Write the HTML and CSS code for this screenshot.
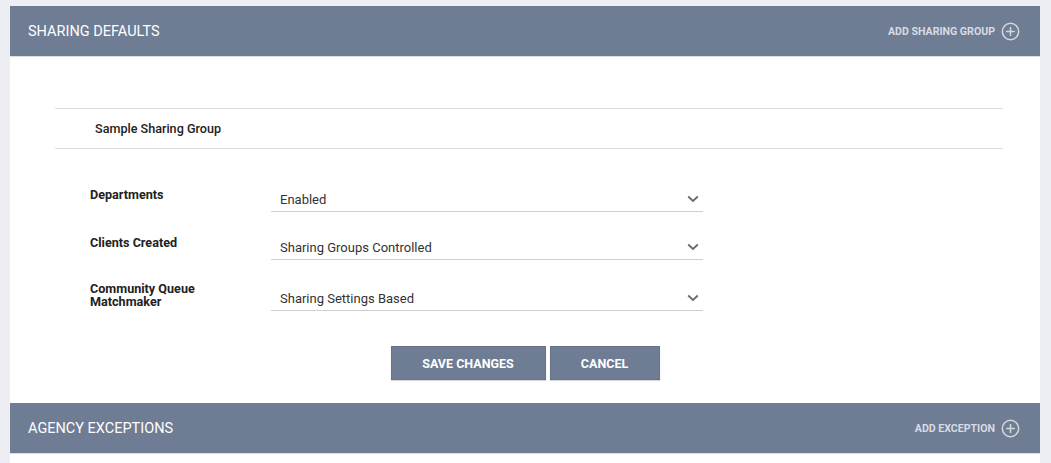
FILE: index.html
```html
<!DOCTYPE html>
<html lang="en">
<head>
<meta charset="utf-8">
<title>Sharing Defaults</title>
<link rel="stylesheet" href="styles.css">
</head>
<body>
<div class="page">
  <section class="panel">
    <header class="panel-header">
      <h2 class="panel-title">SHARING DEFAULTS</h2>
      <button class="header-action" type="button">
        <span>ADD SHARING GROUP</span>
        <svg class="plus-icon" viewBox="0 0 20 20" width="19" height="19" aria-hidden="true">
          <circle cx="10" cy="10" r="8.6" fill="none" stroke="currentColor" stroke-width="1.6"/>
          <path d="M10 5.3v9.4M5.3 10h9.4" stroke="currentColor" stroke-width="1.6" fill="none"/>
        </svg>
      </button>
    </header>
    <div class="panel-body">
      <div class="group-title">Sample Sharing Group</div>
      <div class="form">
        <div class="form-row">
          <label class="form-label">Departments</label>
          <div class="select">
            <span class="select-value">Enabled</span>
            <svg class="chevron" viewBox="0 0 12 8" width="12" height="8" aria-hidden="true"><path d="M1.2 1.5L6 6l4.8-4.5" fill="none" stroke="currentColor" stroke-width="1.8"/></svg>
          </div>
        </div>
        <div class="form-row">
          <label class="form-label">Clients Created</label>
          <div class="select">
            <span class="select-value">Sharing Groups Controlled</span>
            <svg class="chevron" viewBox="0 0 12 8" width="12" height="8" aria-hidden="true"><path d="M1.2 1.5L6 6l4.8-4.5" fill="none" stroke="currentColor" stroke-width="1.8"/></svg>
          </div>
        </div>
        <div class="form-row form-row--tall">
          <label class="form-label">Community Queue<br>Matchmaker</label>
          <div class="select">
            <span class="select-value">Sharing Settings Based</span>
            <svg class="chevron" viewBox="0 0 12 8" width="12" height="8" aria-hidden="true"><path d="M1.2 1.5L6 6l4.8-4.5" fill="none" stroke="currentColor" stroke-width="1.8"/></svg>
          </div>
        </div>
      </div>
      <div class="actions">
        <button class="btn btn--save" type="button">SAVE CHANGES</button>
        <button class="btn btn--cancel" type="button">CANCEL</button>
      </div>
    </div>
  </section>
  <section class="panel">
    <header class="panel-header">
      <h2 class="panel-title">AGENCY EXCEPTIONS</h2>
      <button class="header-action" type="button">
        <span>ADD EXCEPTION</span>
        <svg class="plus-icon" viewBox="0 0 20 20" width="19" height="19" aria-hidden="true">
          <circle cx="10" cy="10" r="8.6" fill="none" stroke="currentColor" stroke-width="1.6"/>
          <path d="M10 5.3v9.4M5.3 10h9.4" stroke="currentColor" stroke-width="1.6" fill="none"/>
        </svg>
      </button>
    </header>
    <div class="panel-body panel-body--empty"></div>
  </section>
</div>
</body>
</html>
```
FILE: styles.css
```css
* { box-sizing: border-box; }
html, body { margin: 0; padding: 0; }
body {
  background: #edeef3;
  font-family: Roboto, "Liberation Sans", Arial, sans-serif;
  color: #222;
  height: 463px;
  overflow: hidden;
}
.page {
  padding: 6px 11px 0 10px;
}
.panel {
  background: #fff;
}
.panel-header {
  height: 51px;
  background: #6e7c94;
  border-bottom: 1px solid #d9dde4;
  display: flex;
  align-items: center;
  justify-content: space-between;
  padding: 0 20px 0 18px;
}
.panel-title {
  margin: 0;
  font-size: 14.5px;
  font-weight: 400;
  color: #fff;
}
.header-action {
  display: flex;
  align-items: center;
  gap: 6px;
  background: none;
  border: 0;
  padding: 0;
  font-family: inherit;
  font-size: 10.6px;
  font-weight: 700;
  color: #d8dbe2;
  cursor: pointer;
}
.plus-icon { display: block; color: #d3d7de; }
.panel-body {
  padding: 51px 37px 23px 45px;
}
.panel-body--empty {
  padding: 0;
  height: 20px;
}
.group-title {
  border-top: 1px solid #dedede;
  border-bottom: 1px solid #dedede;
  height: 41px;
  display: flex;
  align-items: center;
  padding-left: 40px;
  font-size: 12.6px;
  font-weight: 500;
  color: #222;
}
.form {
  margin-top: 37px;
  padding-left: 35px;
  display: flex;
  flex-direction: column;
  gap: 22px;
}
.form-row {
  display: flex;
  align-items: flex-start;
}
.form-row--tall { margin-top: -1px; }
.form-label {
  width: 181px;
  padding-top: 2px;
  font-size: 12.6px;
  font-weight: 700;
  line-height: 13px;
  color: #222;
}
.form-row--tall .form-label { padding-top: 1px; }
.select {
  width: 432px;
  height: 25px;
  margin-top: 1px;
  border-bottom: 1px solid #cfcfcf;
  display: flex;
  align-items: center;
  justify-content: space-between;
  padding: 0 4px 0 9px;
}
.form-row--tall .select { margin-top: 5px; }
.select-value {
  font-size: 13px;
  color: #333;
  padding-top: 1px;
}
.chevron { color: #6a6a6a; display: block; }
.actions {
  margin-top: 35px;
  display: flex;
  justify-content: center;
  gap: 4px;
  margin-left: -45px;
  margin-right: -37px;
}
.btn {
  height: 34px;
  background: #6e7c94;
  border: 1px solid #66738a;
  box-shadow: 0 1px 1px rgba(0,0,0,0.15);
  color: #fff;
  font-family: inherit;
  font-size: 12.5px;
  font-weight: 700;
  cursor: pointer;
}
.btn--save { width: 155px; }
.btn--cancel { width: 110px; }
```
